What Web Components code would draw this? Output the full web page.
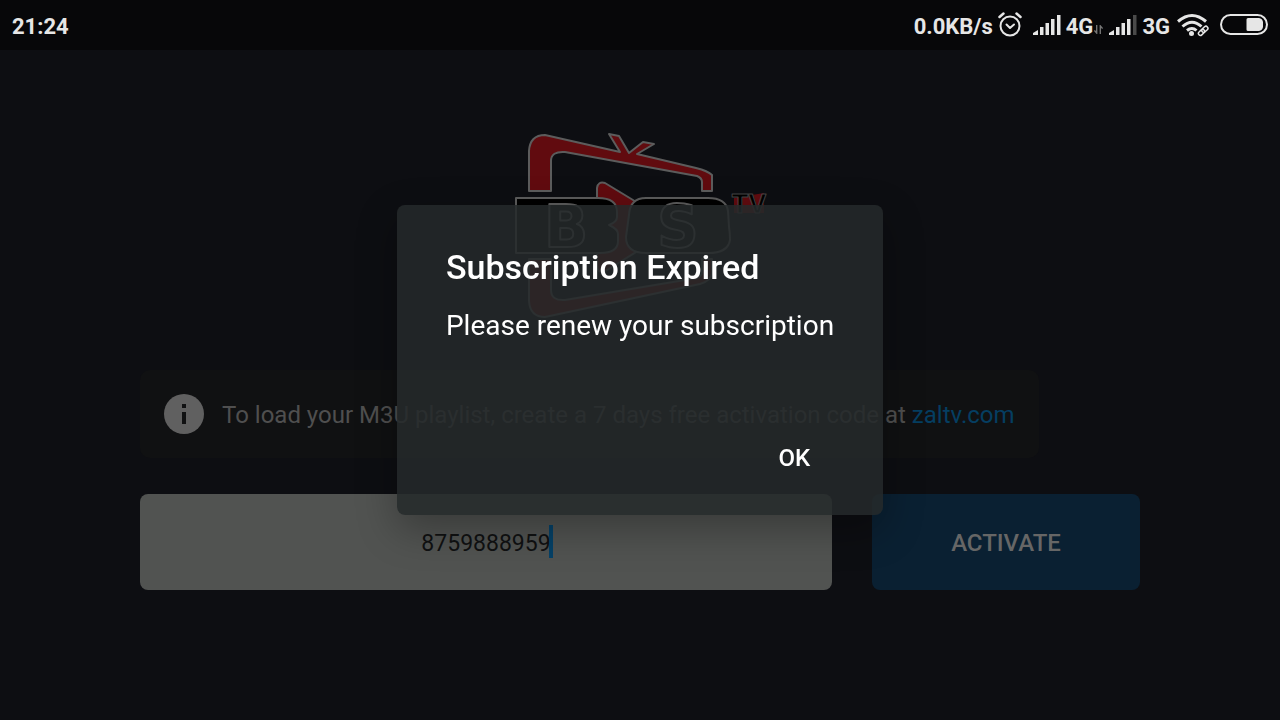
<!DOCTYPE html>
<html lang="en">
<head>
<meta charset="utf-8">
<meta name="viewport" content="width=device-width, initial-scale=1">
<title>BS TV</title>
<style>
  html, body { margin: 0; min-height: 100%; background: #0d0e12; }
  body { font-family: Roboto, "Noto Sans", sans-serif; }
</style>
</head>
<body>
<tv-app></tv-app>

<template id="tpl-app">
  <style>
    :host { display: flex; flex-direction: column; min-height: 100vh; background: #0d0e12; }
    main { display: flex; flex-direction: column; align-items: flex-start; box-sizing: border-box;
           width: 100%; max-width: 1040px; margin: 0 auto; padding: 75px 20px 40px; }
    tv-logo { align-self: center; margin-bottom: 45px; }
    tv-hint { margin-bottom: 36px; }
    tv-activation { width: 100%; }
    a { color: #053e61; text-decoration: none; }
  </style>
  <tv-status></tv-status>
  <main>
    <tv-logo></tv-logo>
    <tv-hint>To load your M3U playlist, create a 7 days free activation code at <a href="#">zaltv.com</a></tv-hint>
    <tv-activation></tv-activation>
  </main>
  <tv-dialog>
    <span slot="title">Subscription Expired</span>
    <span>Please renew your subscription</span>
  </tv-dialog>
</template>

<template id="tpl-status">
  <style>
    :host { display: flex; justify-content: space-between; align-items: center; height: 50px;
            padding: 0 12px; background: #070709; color: #e6e6e6; font-size: 22px; font-weight: 700; line-height: 28px; }
    .right { display: flex; align-items: center; gap: 6px; }
    svg { display: block; }
    .net { display: flex; align-items: center; gap: 5px; }
    .net svg { margin-left: -4px; margin-top: 8px; }
    .alarm { margin: 0 4px 0 -2px; }
    .wifi { margin-right: 4px; }
    time, .net span, .speed { padding-top: 3px; }
  </style>
  <time>21:24</time>
  <div class="right">
    <span class="speed">0.0KB/s</span>
    <svg class="alarm" width="26" height="26" viewBox="0 0 26 26" fill="none" stroke="#e6e6e6" stroke-width="2" stroke-linecap="round">
      <circle cx="13" cy="14" r="9.500"/><path d="M9.500 12.500l3.500 3.500 4-3.500" stroke-linejoin="round"/>
      <path d="M2.500 5l4-3.500M23.500 5l-4-3.500" stroke-width="2.500"/>
    </svg>
    <span class="net"><tv-signal bars="5"></tv-signal><span>4G</span>
      <svg width="9" height="9" viewBox="0 0 10 10" fill="none" stroke="#777" stroke-width="1.500">
        <path d="M3 0v9L0.500 6M7 10V1l2.500 3"/></svg>
    </span>
    <span class="net"><tv-signal bars="4"></tv-signal><span>3G</span></span>
    <svg class="wifi" width="34" height="24" viewBox="0 0 34 24" fill="none" stroke="#e6e6e6" stroke-width="3">
      <path d="M2 8.500Q16 -3.500 30 8.500M6.500 13.500Q16 5 25.500 13.500M11 17.500Q16 13.500 20.500 17.500"/>
      <circle cx="15.500" cy="20.500" r="2.500" fill="#e6e6e6" stroke="none"/>
      <path d="M23 22l9-9" stroke="#070709" stroke-width="6"/>
      <g stroke-width="1.500" transform="rotate(-43 27 18)">
        <rect x="21.500" y="16" width="7" height="4" rx="2"/><rect x="26" y="16" width="7" height="4" rx="2"/></g>
    </svg>
    <svg width="48" height="22" viewBox="0 0 48 22">
      <rect x="1" y="1" width="46" height="19" rx="9.500" fill="none" stroke="#e6e6e6" stroke-width="2"/>
      <path d="M28 4h11a5 5 0 0 1 4 4v5a5 5 0 0 1-4 4H28a1.500 1.500 0 0 1-1.500-1.500v-10A1.500 1.500 0 0 1 28 4z" fill="#e6e6e6"/>
    </svg>
  </div>
</template>

<template id="tpl-signal">
  <style>:host { display: block; } svg { display: block; }</style>
  <svg width="28" height="20" viewBox="0 0 28 20" fill="#e6e6e6">
    <path d="M0 20v-2l5-3v5z"/><rect x="7" y="12" width="3.500" height="8"/><rect x="12.500" y="8" width="3.500" height="12"/>
    <rect x="18" y="4" width="3.500" height="16"/><rect class="last" x="24" y="0" width="3.500" height="20"/>
  </svg>
</template>

<template id="tpl-logo">
  <style>:host { display: block; } svg { display: block; }
    text { font-family: "DejaVu Sans", sans-serif; font-weight: 700; text-anchor: middle; }
    .tag { font-family: "Liberation Sans", sans-serif; }</style>
  <svg width="280" height="200" viewBox="0 0 280 200" role="img" aria-label="BS TV" stroke-linejoin="round">
    <g fill="#610b0f" stroke="#5c5c5c" stroke-width="2">
      <path d="M29 66V26Q30 10 45 10L120 27 109 9 119 11 129 28 143 17 154 19 137 29 196 43Q208 46 212 50V66H202V57Q202 53 197 51L65 27Q51 26 51 36V66Z"/>
      <path d="M97 140V63Q98 56 105 58L133 75 165 97Q169 104 165 109L104 147Q97 148 97 140Z"/>
      <path d="M29 134V176Q30 192 45 192L200 159Q211 156 212 148V134H202V146Q202 151 197 153L65 175Q51 176 51 165V134Z"/>
    </g>
    <g fill="#000" stroke="#5c5c5c" stroke-width="2">
      <path d="M16 73H98Q117 73 117 87V92Q117 97 109 100Q118 104 118 109V116Q118 128 100 128H16Z"/>
      <path d="M146 73H208Q226 73 228 86L229 102Q230 108 230 115Q228 128 208 128H146Q126 128 126 112L129 90Q130 73 146 73Z"/>
      <text x="66" y="122" font-size="58">B</text>
      <text x="178" y="122" font-size="58">S</text>
    </g>
    <path d="M234 73V88H264V68Z" fill="#610b0f"/>
    <text class="tag" x="249" y="88" font-size="27" fill="#000" stroke="#444" stroke-width="1">TV</text>
  </svg>
</template>

<template id="tpl-hint">
  <style>
    :host { display: flex; align-items: center; gap: 18px; box-sizing: border-box; min-height: 88px;
            padding: 12px 24px; border-radius: 10px; background: #101112; color: #4f4f4f; font-size: 24px; line-height: 32px; }
    svg { flex: none; }
    span { padding-top: 2px; }
  </style>
  <svg width="40" height="40" viewBox="0 0 40 40"><circle cx="20" cy="20" r="20" fill="#606060"/>
    <path d="M18 10h4v4h-4zM18 18h4v12h-4z" fill="#101112"/></svg>
  <span><slot></slot></span>
</template>

<template id="tpl-activation">
  <style>
    :host { display: block; }
    form { display: grid; grid-template-columns: minmax(0, 1fr) 268px; gap: 40px; }
    .field { position: relative; font-size: 23px; }
    input, button { box-sizing: border-box; width: 100%; height: 96px; margin: 0; border: 0; border-radius: 8px; font: inherit; outline: none; }
    input { display: block; padding: 2px 16px 0; background: #515351; color: #101112; text-align: center; caret-color: transparent; }
    .caret { position: absolute; left: calc(50% + 5ch); top: 31px; width: 4px; height: 33px; background: #054167; }
    button { padding: 2px 16px 0; background: #0a2032; color: #666; font-size: 24px; font-weight: 500; }
  </style>
  <form>
    <div class="field"><input type="text" inputmode="numeric" aria-label="Activation code" value="8759888959"><i class="caret"></i></div>
    <button type="button">ACTIVATE</button>
  </form>
</template>

<template id="tpl-dialog">
  <style>
    :host { position: fixed; inset: 0; display: flex; align-items: center; justify-content: center; }
    dialog { position: static; box-sizing: border-box; margin: 0; border: 0; max-width: 90%; padding: 40px 49px 34px; border-radius: 8px;
             background: rgba(37, 41, 43, .87); color: #fff; box-shadow: 0 14px 40px rgba(0, 0, 0, .3); }
    h1 { margin: 0 0 16px; font-size: 34px; line-height: 44px; font-weight: 500; }
    p { margin: 0 0 88px; font-size: 28px; line-height: 42px; }
    form { display: flex; justify-content: flex-end; }
    button { height: 46px; padding: 0 24px; border: 0; background: none; color: #fff; font: inherit; font-size: 24px; font-weight: 500; outline: none; }
  </style>
  <dialog open aria-labelledby="t">
    <h1 id="t"><slot name="title"></slot></h1>
    <p><slot></slot></p>
    <form method="dialog"><button>OK</button></form>
  </dialog>
</template>

<script>
  class Base extends HTMLElement {
    constructor() {
      super();
      const id = 'tpl-' + this.constructor.tag;
      this.attachShadow({ mode: 'open' }).append(document.getElementById(id).content.cloneNode(true));
    }
  }
  class TvStatus extends Base { static tag = 'status'; }
  class TvSignal extends Base {
    static tag = 'signal';
    connectedCallback() {
      if (this.getAttribute('bars') === '4') this.shadowRoot.querySelector('.last').setAttribute('fill', '#4a4a4a');
    }
  }
  class TvLogo extends Base { static tag = 'logo'; }
  class TvHint extends Base { static tag = 'hint'; }
  class TvActivation extends Base { static tag = 'activation'; }
  class TvDialog extends Base { static tag = 'dialog'; }
  class TvApp extends Base { static tag = 'app'; }
  for (const c of [TvSignal, TvStatus, TvLogo, TvHint, TvActivation, TvDialog, TvApp]) customElements.define('tv-' + c.tag, c);
</script>
</body>
</html>
